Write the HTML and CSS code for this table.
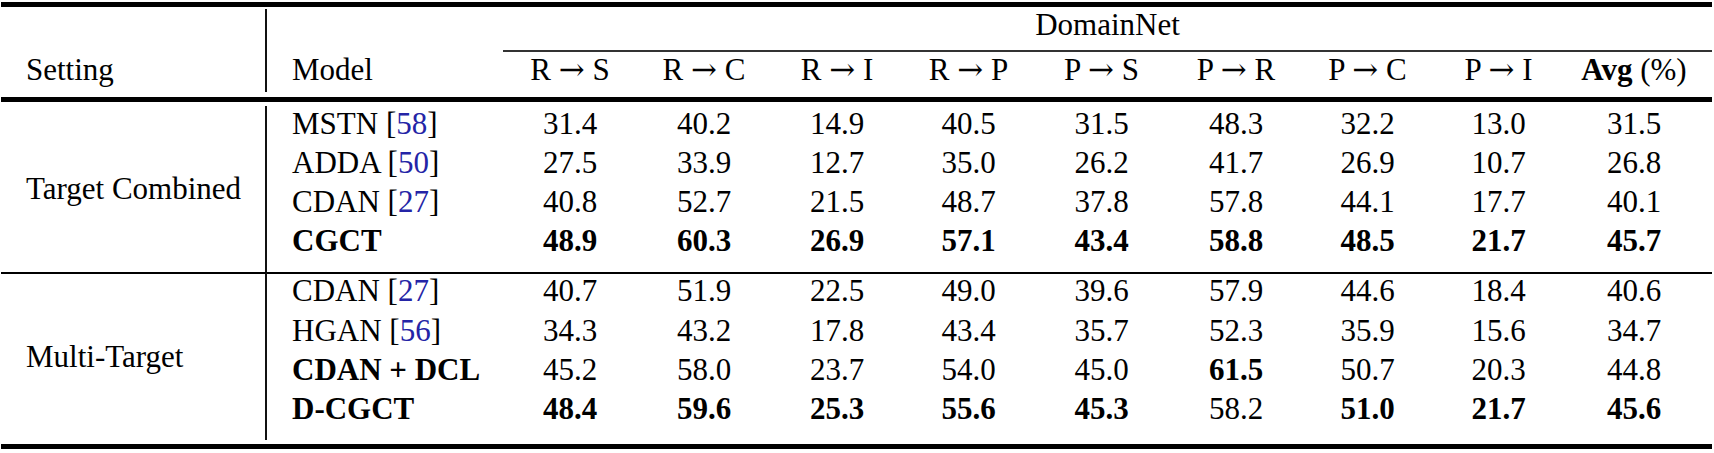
FILE: index.html
```html
<!DOCTYPE html>
<html lang="en">
<head>
<meta charset="utf-8">
<title>DomainNet results</title>
<link rel="stylesheet" href="styles.css">
</head>
<body>
<table class="results">
  <colgroup>
    <col class="c-set">
    <col class="c-model">
    <col class="c-n1"><col class="c-n2"><col class="c-n3"><col class="c-n4"><col class="c-n5"><col class="c-n6"><col class="c-n7"><col class="c-n8"><col class="c-avg">
  </colgroup>
  <thead>
    <tr class="rule-row"><td colspan="11" class="rule-top"><div class="rule"></div></td></tr>
    <tr class="head1">
      <td class="setting head-label" rowspan="2">Setting</td>
      <td class="model head-label" rowspan="2">Model</td>
      <td class="dataset" colspan="9">DomainNet</td>
    </tr>
    <tr class="head2">
      <td>R <span class="arr">→</span> S</td>
      <td>R <span class="arr">→</span> C</td>
      <td>R <span class="arr">→</span> I</td>
      <td>R <span class="arr">→</span> P</td>
      <td>P <span class="arr">→</span> S</td>
      <td>P <span class="arr">→</span> R</td>
      <td>P <span class="arr">→</span> C</td>
      <td>P <span class="arr">→</span> I</td>
      <td class="avg"><b>Avg</b> (%)</td>
    </tr>
    <tr class="rule-row"><td colspan="11" class="rule-head"><div class="rule"></div></td></tr>
  </thead>
  <tbody>
    <tr class="data">
      <td class="setting group-label" rowspan="4">Target Combined</td>
      <td class="model">MSTN [<span class="cite">58</span>]</td>
      <td>31.4</td><td>40.2</td><td>14.9</td><td>40.5</td><td>31.5</td><td>48.3</td><td>32.2</td><td>13.0</td><td class="avg">31.5</td>
    </tr>
    <tr class="data">
      <td class="model">ADDA [<span class="cite">50</span>]</td>
      <td>27.5</td><td>33.9</td><td>12.7</td><td>35.0</td><td>26.2</td><td>41.7</td><td>26.9</td><td>10.7</td><td class="avg">26.8</td>
    </tr>
    <tr class="data">
      <td class="model">CDAN [<span class="cite">27</span>]</td>
      <td>40.8</td><td>52.7</td><td>21.5</td><td>48.7</td><td>37.8</td><td>57.8</td><td>44.1</td><td>17.7</td><td class="avg">40.1</td>
    </tr>
    <tr class="data group-end">
      <td class="model"><b>CGCT</b></td>
      <td><b>48.9</b></td><td><b>60.3</b></td><td><b>26.9</b></td><td><b>57.1</b></td><td><b>43.4</b></td><td><b>58.8</b></td><td><b>48.5</b></td><td><b>21.7</b></td><td class="avg"><b>45.7</b></td>
    </tr>
    <tr class="data group-start">
      <td class="setting group-label" rowspan="4">Multi-Target</td>
      <td class="model">CDAN [<span class="cite">27</span>]</td>
      <td>40.7</td><td>51.9</td><td>22.5</td><td>49.0</td><td>39.6</td><td>57.9</td><td>44.6</td><td>18.4</td><td class="avg">40.6</td>
    </tr>
    <tr class="data">
      <td class="model">HGAN [<span class="cite">56</span>]</td>
      <td>34.3</td><td>43.2</td><td>17.8</td><td>43.4</td><td>35.7</td><td>52.3</td><td>35.9</td><td>15.6</td><td class="avg">34.7</td>
    </tr>
    <tr class="data">
      <td class="model"><b>CDAN + DCL</b></td>
      <td>45.2</td><td>58.0</td><td>23.7</td><td>54.0</td><td>45.0</td><td><b>61.5</b></td><td>50.7</td><td>20.3</td><td class="avg">44.8</td>
    </tr>
    <tr class="data group-end">
      <td class="model"><b>D-CGCT</b></td>
      <td><b>48.4</b></td><td><b>59.6</b></td><td><b>25.3</b></td><td><b>55.6</b></td><td><b>45.3</b></td><td>58.2</td><td><b>51.0</b></td><td><b>21.7</b></td><td class="avg"><b>45.6</b></td>
    </tr>
    <tr class="rule-row"><td colspan="11" class="rule-bottom"><div class="rule"></div></td></tr>
  </tbody>
</table>
</body>
</html>
```

FILE: styles.css
```css
html, body {
  margin: 0;
  padding: 0;
  background: #ffffff;
}

.results {
  margin: 2px 0 0 1px;
  width: 1711px;
  table-layout: fixed;
  border-collapse: separate;
  border-spacing: 0;
  font-family: "Liberation Serif", "Times New Roman", serif;
  font-size: 31px;
  line-height: 30px;
  color: #000000;
}

.c-set { width: 266px; }
.c-model { width: 236px; }
.c-n1 { width: 134px; }
.c-n2 { width: 134px; }
.c-n3 { width: 132px; }
.c-n4 { width: 131px; }
.c-n5 { width: 135px; }
.c-n6 { width: 134px; }
.c-n7 { width: 129px; }
.c-n8 { width: 133px; }
.c-avg { width: 147px; }

.results td {
  box-sizing: border-box;
  padding: 0;
  text-align: center;
  vertical-align: middle;
  white-space: nowrap;
}

.results b {
  font-weight: 700;
}

/* horizontal rules */
.results td.rule-top { padding: 0 0 2px 0; }
.results td.rule-head { padding: 5px 0 4px 0; }
.results td.rule-bottom { padding: 4px 0 0 0; }

.rule {
  height: 5px;
  background: #000000;
}

/* header */
.results td.setting {
  text-align: left;
  padding-left: 25px;
  border-right: 2px solid #111111;
}

.results td.model {
  text-align: left;
  padding-left: 25px;
}

.results td.head-label {
  vertical-align: bottom;
  padding-bottom: 7px;
}

.results td.dataset {
  height: 43px;
  vertical-align: top;
  padding-top: 1px;
  border-bottom: 2px solid #333333;
}

.head2 td {
  height: 40px;
  vertical-align: bottom;
  padding-bottom: 7px;
}

.arr {
  font-family: "DejaVu Serif", serif;
  font-size: 31px;
  line-height: 20px;
}

.results td.avg {
  padding-right: 9px;
}

/* body */
.data td {
  height: 39.3px;
  vertical-align: top;
  padding-top: 2.5px;
}

.group-end td {
  height: 48.1px;
}

.group-start td {
  height: 41.3px;
  border-top: 2px solid #000000;
}

.results td.group-label {
  vertical-align: middle;
  padding-top: 0;
}

.cite {
  color: #2424a6;
}
```
